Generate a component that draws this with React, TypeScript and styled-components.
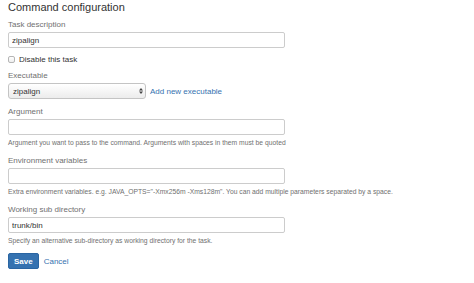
import styled, { createGlobalStyle } from "styled-components";

const GlobalStyle = createGlobalStyle`
  html, body {
    margin: 0;
    padding: 0;
    background: #ffffff;
  }
  body {
    font-family: "Liberation Sans", Arial, sans-serif;
    color: #333333;
  }
`;

const fields = [
  {
    label: "Argument",
    value: "",
    help: "Argument you want to pass to the command. Arguments with spaces in them must be quoted",
  },
  {
    label: "Environment variables",
    value: "",
    help: 'Extra environment variables. e.g. JAVA_OPTS="-Xmx256m -Xms128m". You can add multiple parameters separated by a space.',
  },
  {
    label: "Working sub directory",
    value: "trunk/bin",
    help: "Specify an alternative sub-directory as working directory for the task.",
  },
];

const Page = styled.form`
  display: flex;
  flex-direction: column;
  padding: 0 8px;
  font-size: 8px;
`;

const Title = styled.h2`
  margin: 0;
  font-size: 11px;
  line-height: 15px;
  font-weight: normal;
  color: #333333;
`;

const Field = styled.div`
  display: flex;
  flex-direction: column;
`;

const Label = styled.label<{ $top?: number }>`
  display: block;
  margin-top: ${(p) => p.$top ?? 7}px;
  font-size: 8px;
  line-height: 11px;
  color: #707070;
`;

const TextInput = styled.input`
  display: block;
  box-sizing: border-box;
  width: 277px;
  height: 16px;
  margin: 2px 0 0;
  padding: 0 3px;
  border: 1px solid #cccccc;
  border-radius: 2px;
  font-family: inherit;
  font-size: 8px;
  color: #333333;
  background: #ffffff;
  outline: none;
`;

const Help = styled.div`
  margin-top: 3px;
  font-size: 6.75px;
  line-height: 10px;
  color: #707070;
  white-space: nowrap;
`;

const CheckRow = styled.label`
  display: flex;
  align-items: center;
  gap: 4px;
  margin-top: 6px;
  font-size: 8px;
  line-height: 11px;
  color: #333333;
`;

const Box = styled.span`
  box-sizing: border-box;
  width: 7px;
  height: 7px;
  border: 1px solid #b5b5b5;
  border-radius: 2px;
  background: linear-gradient(#ffffff, #eeeeee);
`;

const SelectRow = styled.div`
  display: flex;
  align-items: center;
  gap: 4px;
  margin-top: 2px;
`;

const SelectWrap = styled.div`
  position: relative;
  width: 138px;
  height: 16px;
`;

const Select = styled.select`
  display: block;
  box-sizing: border-box;
  width: 100%;
  height: 100%;
  padding: 0 4px;
  appearance: none;
  border: 1px solid #c4c4c4;
  border-radius: 3px;
  background: linear-gradient(#ffffff, #ececec);
  font-family: inherit;
  font-size: 8px;
  color: #333333;
  outline: none;
`;

const Arrows = styled.svg`
  position: absolute;
  right: 3px;
  top: 5px;
  pointer-events: none;
`;

const Link = styled.a`
  font-size: 8px;
  color: #3572b0;
  text-decoration: none;
`;

const Actions = styled.div`
  display: flex;
  align-items: center;
  gap: 5px;
  margin-top: 7px;
`;

const SaveButton = styled.button`
  box-sizing: border-box;
  height: 16px;
  padding: 0 5px;
  border: 1px solid #2a65a2;
  border-radius: 2px;
  background: #3572b0;
  color: #ffffff;
  font-family: inherit;
  font-size: 8px;
  font-weight: bold;
`;

const App = () => {
  return (
    <>
      <GlobalStyle />
      <Page onSubmit={(e) => e.preventDefault()}>
        <Title>Command configuration</Title>
        <Label $top={4}>Task description</Label>
        <TextInput defaultValue="zipalign" />
        <CheckRow>
          <Box />
          Disable this task
        </CheckRow>
        <Label $top={5}>Executable</Label>
        <SelectRow>
          <SelectWrap>
            <Select defaultValue="zipalign">
              <option value="zipalign">zipalign</option>
            </Select>
            <Arrows width="4" height="6" viewBox="0 0 4 6">
              <path d="M0 2.4 L2 0 L4 2.4 Z M0 3.6 L2 6 L4 3.6 Z" fill="#444444" />
            </Arrows>
          </SelectWrap>
          <Link href="#">Add new executable</Link>
        </SelectRow>
        {fields.map((f) => (
          <Field key={f.label}>
            <Label>{f.label}</Label>
            <TextInput defaultValue={f.value} />
            <Help>{f.help}</Help>
          </Field>
        ))}
        <Actions>
          <SaveButton type="submit">Save</SaveButton>
          <Link href="#">Cancel</Link>
        </Actions>
      </Page>
    </>
  );
};

export default App;
